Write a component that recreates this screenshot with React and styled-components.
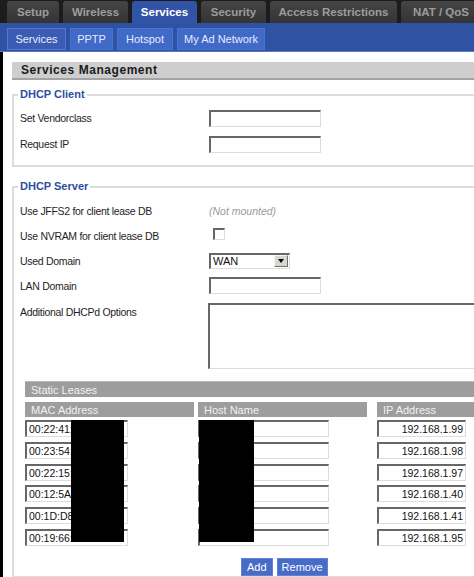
import React from "react";
import styled, { createGlobalStyle } from "styled-components";

const GlobalStyle = createGlobalStyle`
  html, body {
    margin: 0;
    padding: 0;
    background: #000;
    overflow: hidden;
  }
  body {
    font-family: "Liberation Sans", Arial, sans-serif;
  }
`;

const Page = styled.div`
  width: 560px;
  height: 577px;
  background: #000;
  overflow: hidden;
`;

const TopNav = styled.div`
  display: flex;
  gap: 4px;
  height: 23px;
  padding: 1px 0 0 7px;
  box-sizing: border-box;
  background: #1c1c1c;
`;

const MainTab = styled.div`
  flex: none;
  width: ${(p) => p.$w}px;
  display: flex;
  align-items: center;
  justify-content: center;
  font-size: 11.5px;
  font-weight: bold;
  color: ${(p) => (p.$active ? "#ffffff" : "#9c9c9c")};
  background: ${(p) =>
    p.$active ? "#3354a6" : "linear-gradient(#454545, #343434)"};
  border-radius: 3px 3px 0 0;
`;

const SubNav = styled.div`
  display: flex;
  gap: 4px;
  height: 29px;
  padding: 5px 0 0 7px;
  box-sizing: border-box;
  background: #3052a3;
  border-bottom: 1px solid #5b79c0;
`;

const SubTab = styled.div`
  flex: none;
  width: ${(p) => p.$w}px;
  height: 22px;
  display: flex;
  align-items: center;
  justify-content: center;
  font-size: 11px;
  color: #e6ecff;
  background: ${(p) => (p.$active ? "#3a5cb5" : "#4169c7")};
  box-shadow: ${(p) =>
    p.$active ? "inset 0 0 0 1px #5679cf" : "inset 0 0 0 1px #4a72cf"};
`;

const Content = styled.div`
  margin-left: 3px;
  height: 525px;
  padding-top: 10px;
  box-sizing: border-box;
  background: #fff;
`;

const SectionHeader = styled.div`
  margin-left: 9px;
  height: 16px;
  padding-left: 9px;
  display: flex;
  align-items: center;
  background: #cecece;
  border-bottom: 2px solid #a3a3a3;
  font-size: 12px;
  font-weight: bold;
  letter-spacing: 0.55px;
  color: #1b1b1b;
`;

const Fieldset = styled.fieldset`
  margin: ${(p) => p.$top}px 0 0 9px;
  padding: ${(p) => p.$pad};
  border: 2px solid #dcdcdc;
  border-right: none;
  min-width: 0;
`;

const Legend = styled.legend`
  margin-left: 4px;
  padding: 0 2px;
  font-size: 11px;
  line-height: 13px;
  font-weight: bold;
  color: #2d4e9e;
`;

const Row = styled.div`
  display: flex;
  align-items: ${(p) => (p.$top ? "flex-start" : "center")};
  height: ${(p) => p.$h || 25}px;
  padding-left: 6px;
`;

const Label = styled.div`
  flex: none;
  width: 189px;
  font-size: 10.5px;
  letter-spacing: -0.3px;
  color: #1e1e1e;
  padding-top: ${(p) => p.$pt || 0}px;
`;

const insetBorder = `
  border-top: 2px solid #676767;
  border-left: 2px solid #676767;
  border-right: 1px solid #dcdcdc;
  border-bottom: 1px solid #dcdcdc;
`;

const TextInput = styled.div`
  width: ${(p) => p.$w || 112}px;
  height: 17px;
  box-sizing: border-box;
  ${insetBorder}
  background: #fff;
  font-size: 10.5px;
  line-height: 14px;
  padding: 0 2px;
  color: #111;
  text-align: ${(p) => (p.$right ? "right" : "left")};
  white-space: nowrap;
  overflow: hidden;
`;

const Note = styled.span`
  font-size: 10.5px;
  font-style: italic;
  color: #9a9a9a;
`;

const Checkbox = styled.div`
  width: 12px;
  height: 12px;
  margin: -4px 0 0 4px;
  box-sizing: border-box;
  ${insetBorder}
  background: #fff;
`;

const Select = styled.div`
  width: 81px;
  height: 16px;
  box-sizing: border-box;
  ${insetBorder}
  display: flex;
  align-items: center;
  justify-content: space-between;
  padding-left: 2px;
  font-size: 11px;
  color: #111;
`;

const SelectButton = styled.div`
  width: 14px;
  height: 12px;
  margin-right: 1px;
  background: #d8d6d0;
  border: 1px solid;
  border-color: #f4f4f4 #707070 #707070 #f4f4f4;
  box-sizing: border-box;
  display: flex;
  align-items: center;
  justify-content: center;
`;

const TextArea = styled.div`
  width: 280px;
  height: 66px;
  margin-left: -1px;
  margin-top: 5px;
  box-sizing: border-box;
  ${insetBorder}
  background: #fff;
`;

const Leases = styled.div`
  margin: 10px 0 0 11px;
  width: 520px;
`;

const LeasesBar = styled.div`
  height: 15px;
  padding-left: 6px;
  display: flex;
  align-items: center;
  background: #9d9d9d;
  border-top: 1px solid #b8b8b8;
  font-size: 11px;
  color: #f2f2f2;
`;

const LeaseGrid = styled.div`
  display: grid;
  grid-template-columns: 173px 179px 168px;
  align-items: start;
  margin-top: ${(p) => p.$mt || 0}px;
`;

const HeadCell = styled.div`
  width: ${(p) => (p.$w ? `${p.$w}px` : "auto")};
  height: 15px;
  padding-left: 6px;
  box-sizing: border-box;
  display: flex;
  align-items: center;
  background: #9d9d9d;
  font-size: 11px;
  color: #f2f2f2;
`;

const LeaseRows = styled.div`
  position: relative;
  margin-top: 3px;
  display: flex;
  flex-direction: column;
  gap: 4.8px;
`;

const Redaction = styled.div`
  position: absolute;
  top: 0;
  bottom: 4px;
  left: ${(p) => p.$left}px;
  width: ${(p) => p.$w}px;
  background: #000;
`;

const ButtonRow = styled.div`
  display: flex;
  gap: 4px;
  margin: 12px 0 0 216px;
`;

const Button = styled.div`
  height: 18px;
  padding: 0 ${(p) => p.$px}px;
  display: flex;
  align-items: center;
  background: #476cc8;
  border: 1px solid #5f82d6;
  box-sizing: border-box;
  font-size: 11px;
  color: #fff;
`;

const mainTabs = [
  { name: "Setup", w: 52 },
  { name: "Wireless", w: 65 },
  { name: "Services", w: 65, active: true },
  { name: "Security", w: 65 },
  { name: "Access Restrictions", w: 127 },
  { name: "NAT / QoS", w: 80 },
];

const subTabs = [
  { name: "Services", w: 59, active: true },
  { name: "PPTP", w: 43 },
  { name: "Hotspot", w: 56 },
  { name: "My Ad Network", w: 88 },
];

const leases = [
  { mac: "00:22:41:", ip: "192.168.1.99" },
  { mac: "00:23:54:", ip: "192.168.1.98" },
  { mac: "00:22:15:", ip: "192.168.1.97" },
  { mac: "00:12:5A", ip: "192.168.1.40" },
  { mac: "00:1D:D8", ip: "192.168.1.41" },
  { mac: "00:19:66:", ip: "192.168.1.95" },
];

export default function App() {
  return (
    <Page>
      <GlobalStyle />
      <TopNav>
        {mainTabs.map((t) => (
          <MainTab key={t.name} $w={t.w} $active={t.active}>
            {t.name}
          </MainTab>
        ))}
      </TopNav>
      <SubNav>
        {subTabs.map((t) => (
          <SubTab key={t.name} $w={t.w} $active={t.active}>
            {t.name}
          </SubTab>
        ))}
      </SubNav>
      <Content>
        <SectionHeader>Services Management</SectionHeader>

        <Fieldset $top={8} $pad="4px 0 8px 0">
          <Legend>DHCP Client</Legend>
          <Row $h={26}>
            <Label>Set Vendorclass</Label>
            <TextInput />
          </Row>
          <Row $h={26}>
            <Label>Request IP</Label>
            <TextInput />
          </Row>
        </Fieldset>

        <Fieldset $top={13} $pad="5px 0 0 0">
          <Legend>DHCP Server</Legend>
          <Row>
            <Label>Use JFFS2 for client lease DB</Label>
            <Note>(Not mounted)</Note>
          </Row>
          <Row>
            <Label>Use NVRAM for client lease DB</Label>
            <Checkbox />
          </Row>
          <Row>
            <Label>Used Domain</Label>
            <Select>
              WAN
              <SelectButton>
                <svg width="6" height="4" viewBox="0 0 6 4">
                  <path d="M0 0h6L3 4z" fill="#000" />
                </svg>
              </SelectButton>
            </Select>
          </Row>
          <Row>
            <Label>LAN Domain</Label>
            <TextInput />
          </Row>
          <Row $top $h={73}>
            <Label $pt={8}>Additional DHCPd Options</Label>
            <TextArea />
          </Row>

          <Leases>
            <LeasesBar>Static Leases</LeasesBar>
            <LeaseGrid $mt={5}>
              <HeadCell $w={169}>MAC Address</HeadCell>
              <HeadCell $w={169}>Host Name</HeadCell>
              <HeadCell>IP Address</HeadCell>
            </LeaseGrid>
            <LeaseRows>
              {leases.map((l) => (
                <LeaseGrid key={l.ip}>
                  <TextInput $w={103}>{l.mac}</TextInput>
                  <TextInput $w={131} />
                  <TextInput $w={89} $right>
                    {l.ip}
                  </TextInput>
                </LeaseGrid>
              ))}
              <Redaction $left={46} $w={53} />
              <Redaction $left={174} $w={55} />
            </LeaseRows>
            <ButtonRow>
              <Button $px={5}>Add</Button>
              <Button $px={4}>Remove</Button>
            </ButtonRow>
          </Leases>
        </Fieldset>
      </Content>
    </Page>
  );
}
